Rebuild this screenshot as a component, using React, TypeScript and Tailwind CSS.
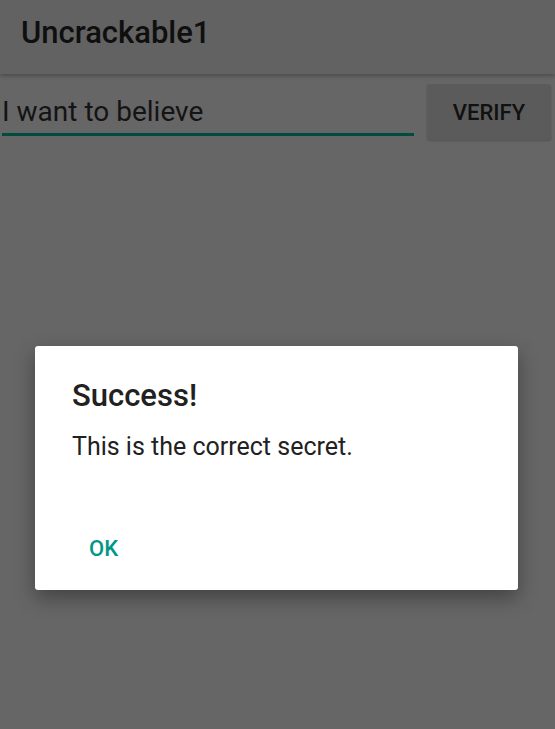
import React from 'react';

const App: React.FC = () => {
  return (
    <div className="relative h-[729px] w-[555px] overflow-hidden bg-[#666666] font-['Roboto','Liberation_Sans',sans-serif]">
      <div className="flex h-[74px] items-start bg-[#626262] pl-[21px] pt-[13px] shadow-[0_2px_4px_rgba(0,0,0,0.25)]">
        <h1 className="text-[31px] font-medium leading-[40px] text-[#0f0f0f]">Uncrackable1</h1>
      </div>
      <div className="flex items-start gap-[13px] pl-[2px] pr-[4px] pt-[10px]">
        <div className="flex-1 border-b-[3px] border-[#004d40] pt-[8px] pb-[1px]">
          <p className="text-[28px] leading-[40px] text-[#141414]">I want to believe</p>
        </div>
        <button className="flex h-[56px] w-[124px] items-center justify-center rounded-[3px] bg-[#5b5b5b] text-[22px] font-medium text-[#111111] shadow-[0_1px_2px_rgba(0,0,0,0.2)]">
          VERIFY
        </button>
      </div>

      <div className="absolute left-[35px] top-[346px] flex h-[244px] w-[483px] flex-col rounded-[3px] bg-white shadow-[0_8px_20px_rgba(0,0,0,0.35)]">
        <div className="px-[37px] pt-[31px]">
          <h2 className="text-[31px] font-medium leading-[38px] text-[#212121]">Success!</h2>
          <p className="mt-[15px] text-[25px] leading-[34px] text-[#212121]">This is the correct secret.</p>
        </div>
        <div className="mt-auto px-[54px] pb-[25px]">
          <button className="text-[22px] font-medium text-[#009688]">OK</button>
        </div>
      </div>
    </div>
  );
};

export default App;
